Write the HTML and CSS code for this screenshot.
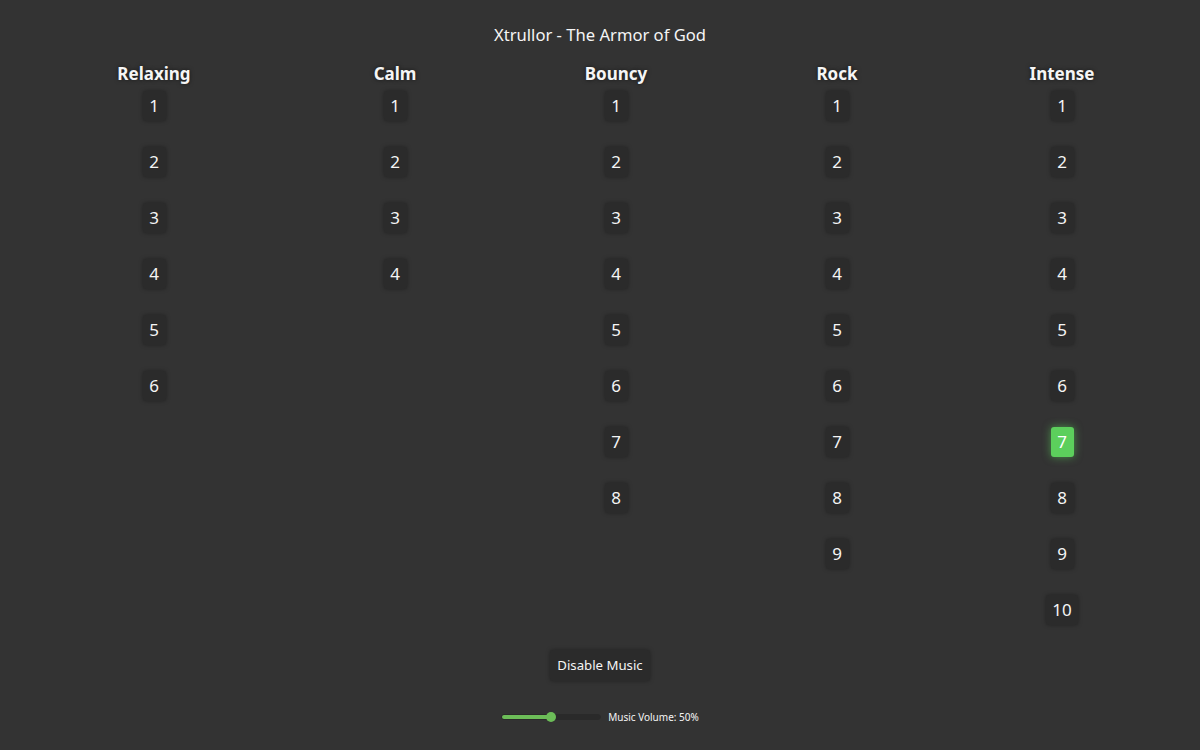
FILE: index.html
```html
<!DOCTYPE html>
<html lang="en">
<head>
    <meta charset="UTF-8">
    <meta name="viewport" content="width=device-width, initial-scale=1.0">
    <title>Music Player</title>
    <link rel="stylesheet" href="styles.css">
</head>
<body>

    <h1 class="now-playing" id="nowPlaying">Xtrullor - The Armor of God</h1>

    <div class="moods" id="moods"></div>

    <div class="controls">
        <button class="toggle-music" id="toggleMusic">Disable Music</button>
        <div class="volume">
            <input type="range" id="volume" min="0" max="100" value="50">
            <label for="volume" id="volumeLabel">Music Volume: 50%</label>
        </div>
    </div>

    <script>
        // number of tracks in each mood
        const moods = [
            { name: "Relaxing", tracks: 6 },
            { name: "Calm", tracks: 4 },
            { name: "Bouncy", tracks: 8 },
            { name: "Rock", tracks: 9 },
            { name: "Intense", tracks: 10 }
        ];
        let current = { mood: "Intense", track: 7 };

        function buildMoods() {
            const moodsDiv = document.getElementById("moods");
            moodsDiv.innerHTML = '';
            moods.forEach(mood => {
                const col = document.createElement("div");
                col.className = "mood";
                col.innerHTML = `<h2>${mood.name}</h2>`;
                for (let i = 1; i <= mood.tracks; i++) {
                    const btn = document.createElement("button");
                    btn.className = "track";
                    if (mood.name === current.mood && i === current.track) btn.classList.add("active");
                    btn.textContent = i;
                    btn.addEventListener("click", function() {
                        current = { mood: mood.name, track: i };
                        buildMoods();
                    });
                    col.appendChild(btn);
                }
                moodsDiv.appendChild(col);
            });
        }

        buildMoods();

        const volume = document.getElementById("volume");
        function updateVolume() {
            const v = volume.value;
            volume.style.background = `linear-gradient(to right, #6cbd58 ${v}%, #2a2a2a ${v}%)`;
            document.getElementById("volumeLabel").textContent = "Music Volume: " + v + "%";
        }
        volume.addEventListener("input", updateVolume);
        updateVolume();

        document.getElementById("toggleMusic").addEventListener("click", function() {
            this.textContent = this.textContent === "Disable Music" ? "Enable Music" : "Disable Music";
        });
    </script>

</body>
</html>
```

FILE: styles.css
```css
body {
    margin: 8px;
    font-family: 'Noto Sans', 'Open Sans', sans-serif;
    background-color: #333333;
    color: #f5f5f5;
    text-align: center;
}

.now-playing {
    font-size: 16.6px;
    font-weight: normal;
    line-height: 24px;
    margin: 15px 0 15px;
}

.moods {
    display: grid;
    grid-template-columns: 292fr 190fr 252fr 190fr 260fr;
    align-items: start;
}

.mood {
    display: flex;
    flex-direction: column;
    align-items: center;
    gap: 26px;
}

.mood h2 {
    font-size: 17px;
    line-height: 24px;
    margin: 0 0 -21px;
    text-shadow: 0 0 4px rgba(0, 0, 0, 0.6);
}

button {
    font-family: inherit;
    color: #f5f5f5;
    background-color: #2b2b2b;
    border: none;
    border-radius: 3px;
    box-shadow: 0 0 4px rgba(0, 0, 0, 0.35);
    cursor: pointer;
}

.track {
    box-sizing: border-box;
    font-size: 17px;
    line-height: 22px;
    padding: 4px 6px;
    min-width: 23px;
}

.track:hover {
    background-color: #3a3a3a;
}

.track.active {
    background-color: #5ccf5c;
    color: #ffffff;
    box-shadow: 0 0 8px rgba(92, 207, 92, 0.6);
}

.controls {
    display: flex;
    flex-direction: column;
    align-items: center;
    margin-top: 25px;
    gap: 29px;
}

.toggle-music {
    font-size: 13.2px;
    line-height: 21px;
    padding: 5px 7px;
}

.volume {
    display: flex;
    align-items: center;
    gap: 7px;
    font-size: 10px;
}

.volume input[type=range] {
    -webkit-appearance: none;
    appearance: none;
    width: 100px;
    height: 6px;
    margin: 0;
    border-radius: 3px;
    border: 1px solid #2a2a2a;
    box-sizing: border-box;
    outline: none;
}

.volume input[type=range]::-webkit-slider-thumb {
    -webkit-appearance: none;
    width: 10px;
    height: 10px;
    border-radius: 50%;
    background: #6cbd58;
    cursor: pointer;
}
```
